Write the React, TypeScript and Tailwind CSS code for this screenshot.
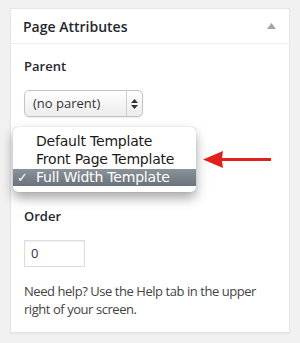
import React from 'react';

const sans = { fontFamily: '"Open Sans", "Noto Sans", sans-serif' };
const menuFont = { fontFamily: '"DejaVu Sans", "Noto Sans", sans-serif' };

function SelectBox({ label }: { label: string }) {
  return (
    <div className="flex h-[27px] w-[119px] items-stretch rounded-[5px] border border-[#c4c4c4] bg-gradient-to-b from-white to-[#ececec] shadow-[0_1px_1px_rgba(0,0,0,0.08)]">
      <div className="flex flex-1 items-center overflow-hidden whitespace-nowrap pl-[8px] text-[13px] text-[#333]">{label}</div>
      <div className="flex w-[16px] flex-col items-center justify-center border-l border-[#cfcfcf]">
        <svg width="7" height="10" viewBox="0 0 7 10">
          <path d="M3.5 0 L7 4 L0 4 Z" fill="#333" />
          <path d="M3.5 10 L7 6 L0 6 Z" fill="#333" />
        </svg>
      </div>
    </div>
  );
}

export default function App() {
  return (
    <div className="h-[343px] w-[300px] bg-[#f1f1f1] pt-[8px] pl-[10px]" style={sans}>
      <div className="w-[280px] border border-[#e5e5e5] bg-white shadow-[0_1px_1px_rgba(0,0,0,0.04)]">
        <div className="flex h-[35px] items-center justify-between border-b border-[#eeeeee] pl-[12px] pr-[13px]">
          <span className="text-[14px] font-semibold text-[#23282d]">Page Attributes</span>
          <svg width="9" height="6" viewBox="0 0 9 6">
            <path d="M4.5 0 L9 6 L0 6 Z" fill="#a0a5aa" />
          </svg>
        </div>
        <div className="px-[13px] pt-[12px] pb-[14px] text-[#444]">
          <div className="text-[13px] leading-[20px] font-semibold text-[#23282d]">Parent</div>
          <div className="mt-[14px]">
            <SelectBox label="(no parent)" />
          </div>

          {/* open template menu lies over the template field */}
          <div className="relative h-[75px]">
            <div
              className="absolute top-[10px] left-[-11px] w-[183px] rounded-[5px] bg-white pt-[5px] pb-[6px] text-[14px] tracking-[-0.2px] text-[#1a1a1a] shadow-[0_6px_12px_rgba(0,0,0,0.35),0_0_1px_rgba(0,0,0,0.3)]"
              style={menuFont}
            >
              <div className="flex h-[18px] items-center pl-[23px]">Default Template</div>
              <div className="flex h-[18px] items-center pl-[23px]">Front Page Template</div>
              <div className="mt-[1px] flex h-[17px] items-center bg-gradient-to-b from-[#8a929a] to-[#6a727b] text-white">
                <span className="w-[23px] pl-[4px] text-[13px]">✓</span>
                <span>Full Width Template</span>
              </div>
            </div>
            <svg className="absolute top-[33px] left-[179px]" width="70" height="19" viewBox="0 0 70 19">
              <path d="M0 9.5 L20 1 L19 8 L68 8 L68 11 L19 11 L20 18 Z" fill="#e3201d" />
            </svg>
          </div>

          <div className="mt-[14px] text-[13px] leading-[20px] font-semibold text-[#23282d]">Order</div>
          <div className="mt-[14px] flex h-[27px] w-[61px] items-center border border-[#dddddd] pl-[6px] text-[13px] text-[#32373c] shadow-[inset_0_1px_2px_rgba(0,0,0,0.07)]">
            0
          </div>
          <p className="mt-[15px] text-[13px] leading-[18px] tracking-[-0.45px] text-[#444]">
            Need help? Use the Help tab in the upper right of your screen.
          </p>
        </div>
      </div>
    </div>
  );
}
